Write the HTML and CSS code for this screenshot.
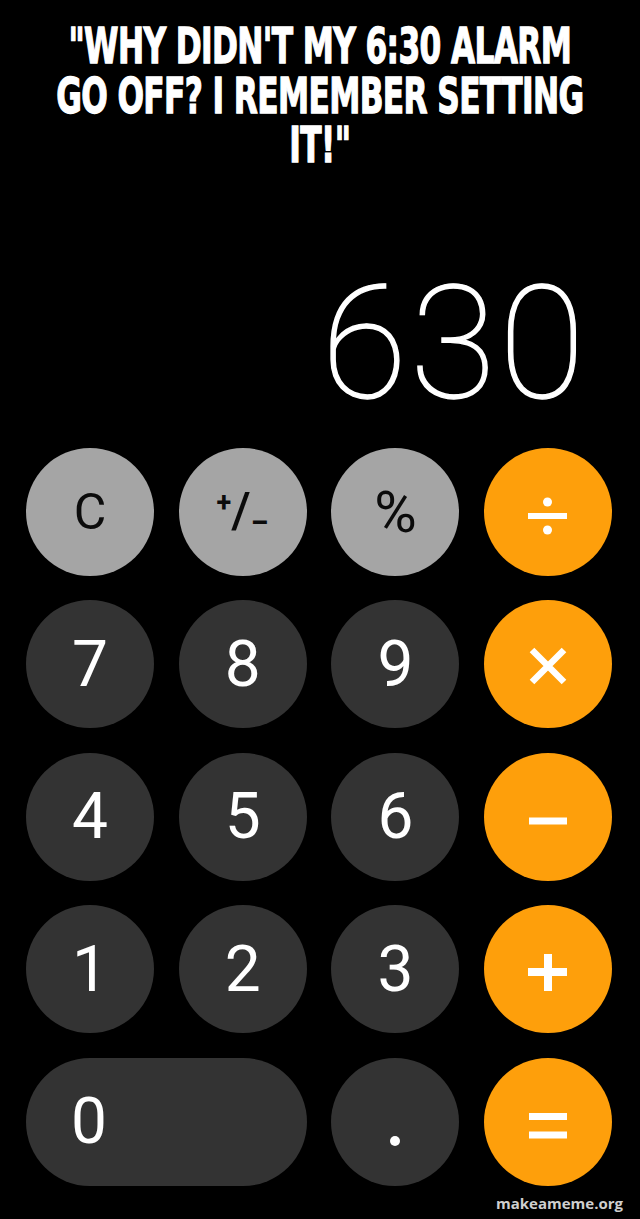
FILE: index.html
```html
<!doctype html>
<html lang="en">
<head>
  <meta charset="UTF-8">
  <meta name="viewport" content="width=device-width, initial-scale=1.0">
  <title>makeameme.org - 630</title>
  <link rel="stylesheet" href="styles.css">
</head>
<body>
  <div class="meme">
    <h1 class="caption"><span class="caption-text">"Why didn't my 6:30 alarm<br>go off? I remember setting<br>it!"</span></h1>

    <div class="display">630</div>

    <div class="keypad">
      <button class="key light clear">C</button>
      <button class="key light plusminus"><span class="pm-plus">+</span><span class="pm-slash">/</span><span class="pm-minus">−</span></button>
      <button class="key light percent">%</button>
      <button class="key op" aria-label="divide">
        <svg viewBox="0 0 128 128" width="128" height="128">
          <rect x="44" y="65" width="39" height="6" fill="#fff"/>
          <circle cx="63.5" cy="54" r="4.5" fill="#fff"/>
          <circle cx="63.5" cy="82" r="4.5" fill="#fff"/>
        </svg>
      </button>

      <button class="key dark">7</button>
      <button class="key dark">8</button>
      <button class="key dark">9</button>
      <button class="key op" aria-label="multiply">
        <svg viewBox="0 0 128 128" width="128" height="128">
          <path d="M48 50 L80 82 M80 50 L48 82" stroke="#fff" stroke-width="6.5"/>
        </svg>
      </button>

      <button class="key dark">4</button>
      <button class="key dark">5</button>
      <button class="key dark">6</button>
      <button class="key op" aria-label="minus">
        <svg viewBox="0 0 128 128" width="128" height="128">
          <rect x="45" y="64.5" width="38" height="7" fill="#fff"/>
        </svg>
      </button>

      <button class="key dark">1</button>
      <button class="key dark">2</button>
      <button class="key dark">3</button>
      <button class="key op" aria-label="plus">
        <svg viewBox="0 0 128 128" width="128" height="128">
          <rect x="44" y="63" width="39" height="8" fill="#fff"/>
          <rect x="60" y="49" width="8" height="37" fill="#fff"/>
        </svg>
      </button>

      <button class="key dark zero">0</button>
      <button class="key dark dot" aria-label="decimal point"><span class="dot-mark"></span></button>
      <button class="key op" aria-label="equals">
        <svg viewBox="0 0 128 128" width="128" height="128">
          <rect x="45" y="55" width="38" height="7" fill="#fff"/>
          <rect x="45" y="73.5" width="38" height="7" fill="#fff"/>
        </svg>
      </button>
    </div>

    <div class="watermark">makeameme.org</div>
  </div>
</body>
</html>
```

FILE: styles.css
```css
body {
  margin: 0;
  background: #000;
  font-family: Roboto, "Liberation Sans", Arial, sans-serif;
}
.meme {
  position: relative;
  width: 640px;
  height: 1219px;
  background: #000;
  overflow: hidden;
}
.caption {
  display: flex;
  justify-content: center;
  margin: 0;
  padding-top: 22px;
  font-family: "DejaVu Sans", sans-serif;
  font-weight: bold;
  font-size: 50px;
  line-height: 49.5px;
  color: #fff;
  text-transform: uppercase;
  letter-spacing: -1px;
}
.caption-text {
  display: block;
  flex-shrink: 0;
  white-space: nowrap;
  text-align: center;
  transform: scaleX(0.625);
  -webkit-text-stroke: 1.4px #fff;
}
.display {
  margin-top: 94px;
  margin-bottom: 26px;
  padding-right: 52px;
  height: 157px;
  font-family: Roboto, sans-serif;
  font-weight: 100;
  font-size: 157px;
  line-height: 157px;
  letter-spacing: 3px;
  color: #fff;
  text-align: right;
  -webkit-text-stroke: 1.3px #fff;
}
.keypad {
  display: grid;
  grid-template-columns: repeat(4, 128px);
  grid-auto-rows: 128px;
  column-gap: 24.7px;
  row-gap: 24.5px;
  padding-left: 26px;
}
.key {
  display: flex;
  align-items: center;
  justify-content: center;
  padding: 0;
  border: none;
  border-radius: 50%;
  font-family: Roboto, "Liberation Sans", sans-serif;
  font-size: 64px;
  color: #fff;
  cursor: pointer;
}
.key svg {
  display: block;
}
.light {
  background: #a5a5a5;
  color: #0b0b0b;
}
.clear {
  font-size: 50px;
}
.dark {
  background: #333333;
}
.op {
  background: #fe9f0b;
}
.percent {
  font-size: 58px;
}
.plusminus {
  align-items: flex-start;
  padding-top: 38px;
  font-size: 50px;
  font-weight: 500;
}
.plusminus span {
  line-height: 1;
}
.pm-plus {
  font-size: 27px;
  font-weight: bold;
  margin-top: 4px;
}
.pm-minus {
  font-size: 33px;
  font-weight: bold;
  margin-top: 20px;
}
.zero {
  grid-column: span 2;
  border-radius: 64px;
  justify-content: flex-start;
  padding-left: 45px;
}
.dot {
  align-items: flex-end;
}
.dot-mark {
  width: 10px;
  height: 10px;
  margin-bottom: 40px;
  border-radius: 50%;
  background: #fff;
}
.watermark {
  position: absolute;
  right: 17px;
  bottom: 6px;
  font-family: "Open Sans", "DejaVu Sans", sans-serif;
  font-weight: bold;
  font-size: 15px;
  color: #cfcfcf;
}
```
